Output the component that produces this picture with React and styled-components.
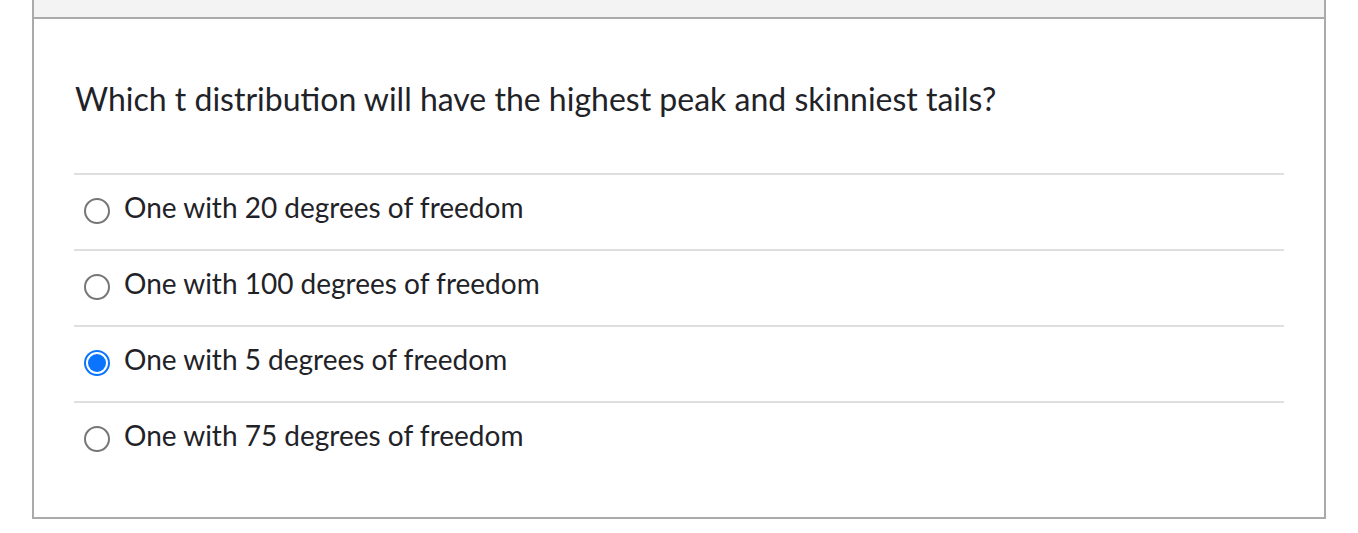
import React from "react";
import styled, { createGlobalStyle } from "styled-components";

const GlobalStyle = createGlobalStyle`
  body {
    margin: 0;
    background: #ffffff;
    font-family: Lato, "Liberation Sans", sans-serif;
    color: #2d3b45;
  }
`;

const Page = styled.div`
  padding: 0 32px 0 32px;
  width: 1294px;
`;

const Card = styled.div`
  border: 2px solid #aaaaaa;
  border-top: none;
  background: #ffffff;
`;

const Header = styled.div`
  height: 17px;
  background: #f3f3f3;
  border-bottom: 2px solid #aaaaaa;
`;

const Body = styled.div`
  padding: 60px 40px 40px 40px;
`;

const Question = styled.div`
  font-size: 32px;
  line-height: 40px;
  color: #1f2328;
  margin-bottom: 54px;
  padding-left: 1px;
`;

const Answers = styled.div`
  display: flex;
  flex-direction: column;
`;

const Answer = styled.label`
  display: flex;
  align-items: center;
  gap: 14px;
  height: 74px;
  border-top: 2px solid #dfdfdf;
  padding-left: 10px;
  font-size: 28px;
  color: #1f2328;
`;

const AnswerText = styled.span`
  margin-bottom: 10px;
`;

const Radio = styled.span`
  box-sizing: border-box;
  flex: none;
  width: 26px;
  height: 26px;
  margin-bottom: 2px;
  border-radius: 50%;
  border: 2px solid ${(p) => (p.$checked ? "#0b74ff" : "#767676")};
  display: flex;
  align-items: center;
  justify-content: center;
  &::after {
    content: "";
    width: 18px;
    height: 18px;
    border-radius: 50%;
    background: #0b74ff;
    display: ${(p) => (p.$checked ? "block" : "none")};
  }
`;

const options = [
  { text: "One with 20 degrees of freedom", checked: false },
  { text: "One with 100 degrees of freedom", checked: false },
  { text: "One with 5 degrees of freedom", checked: true },
  { text: "One with 75 degrees of freedom", checked: false },
];

export default function App() {
  return (
    <>
      <GlobalStyle />
      <Page>
        <Card>
          <Header />
          <Body>
            <Question>
              Which t distribution will have the highest peak and skinniest tails?
            </Question>
            <Answers>
              {options.map((o) => (
                <Answer key={o.text}>
                  <Radio $checked={o.checked} />
                  <AnswerText>{o.text}</AnswerText>
                </Answer>
              ))}
            </Answers>
          </Body>
        </Card>
      </Page>
    </>
  );
}
